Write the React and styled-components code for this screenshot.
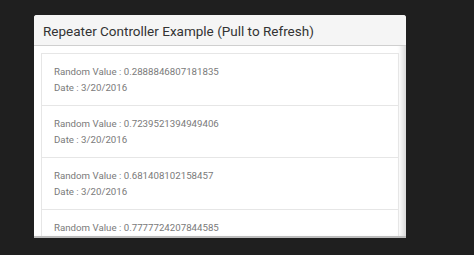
import React from 'react';
import styled, { createGlobalStyle } from 'styled-components';

const Global = createGlobalStyle`
  html, body {
    margin: 0;
    padding: 0;
    background: #1f1f1f;
  }
  body {
    font-family: Roboto, "Open Sans", sans-serif;
  }
`;

const Page = styled.div`
  width: 474px;
  height: 255px;
  padding: 15px 0 0 34px;
  box-sizing: border-box;
  overflow: hidden;
`;

const Panel = styled.div`
  width: 372px;
  height: 223px;
  background: #fff;
  border-radius: 3px 3px 0 0;
  border-bottom: 2px solid #bcbcbc;
  box-sizing: border-box;
  overflow: hidden;
  display: flex;
  flex-direction: column;
  box-shadow: inset -7px 0 6px -4px rgba(0, 0, 0, 0.18);
`;

const Header = styled.div`
  height: 31px;
  flex-shrink: 0;
  background: #f5f5f5;
  border-bottom: 1px solid #cfcfcf;
  box-sizing: border-box;
  display: flex;
  align-items: center;
  padding-left: 9px;
  padding-top: 1px;
  font-size: 13.5px;
  color: #333;
`;

const Body = styled.div`
  flex: 1;
  padding: 7px 7px 0 7px;
  overflow: hidden;
`;

const List = styled.div`
  border: 1px solid #e6e6e6;
  border-bottom: none;
`;

const Item = styled.div`
  padding: 10px 0 9px 12px;
  border-bottom: 1px solid #e6e6e6;
  color: #7a7a7a;
  font-size: 9.7px;
  line-height: 16px;
`;

const items = [
  { value: '0.2888846807181835', date: '3/20/2016' },
  { value: '0.7239521394949406', date: '3/20/2016' },
  { value: '0.681408102158457', date: '3/20/2016' },
  { value: '0.7777724207844585', date: '3/20/2016' },
];

export default function App() {
  return (
    <Page>
      <Global />
      <Panel>
        <Header>Repeater Controller Example (Pull to Refresh)</Header>
        <Body>
          <List>
            {items.map((it, i) => (
              <Item key={i}>
                <div>Random Value : {it.value}</div>
                <div>Date : {it.date}</div>
              </Item>
            ))}
          </List>
        </Body>
      </Panel>
    </Page>
  );
}
